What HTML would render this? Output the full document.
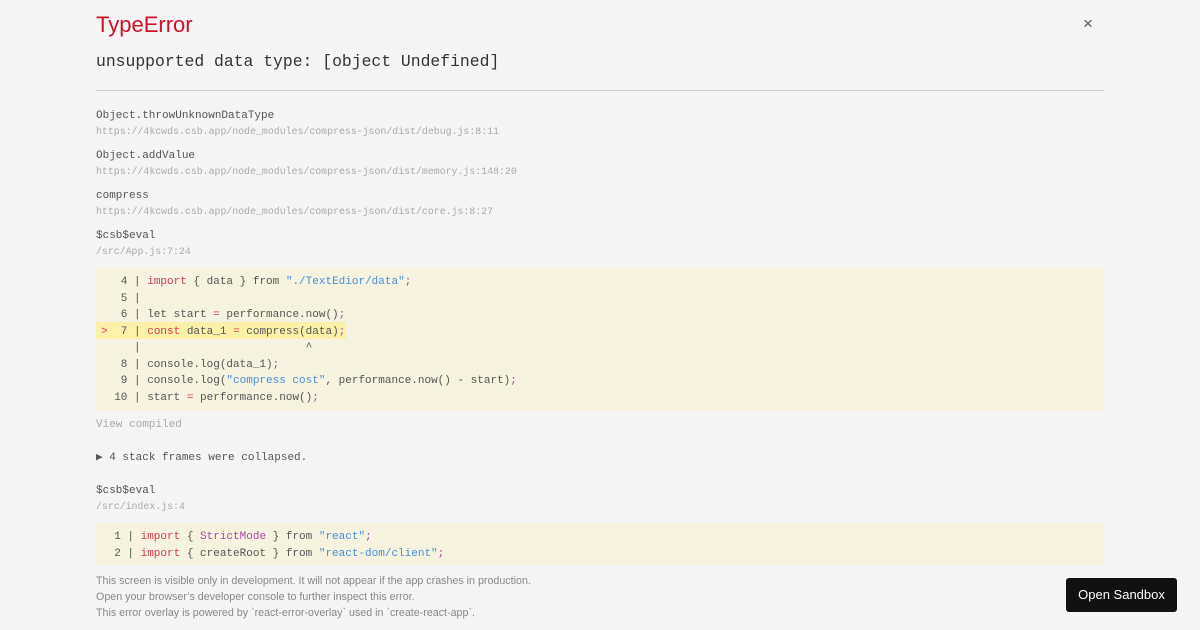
<!DOCTYPE html>
<html><head><style>
body{margin:0;width:1200px;height:630px;background:#f5f5f5;position:relative;overflow:hidden;font-family:"Liberation Mono",monospace;color:#444}
.a{position:absolute;white-space:pre;line-height:1}
.t{font-family:"Liberation Sans",sans-serif;font-size:22px;color:#ce1126;left:96px;top:14px}
.m{font-size:16.4px;color:#333;left:96px;top:54px}
.f{font-size:11px;color:#555;left:96px}
.u{font-size:9.9px;color:#aaa;left:96px}
.box{position:absolute;left:96px;width:1008px;background:#f6f3e0}
.c{font-size:11px;color:#555;left:101px}
.k{color:#d3394f}.s{color:#4a8fd6}.p{color:#a34aa8}
.ft{font-family:"Liberation Sans",sans-serif;font-size:10.7px;color:#888;left:96px}
</style></head><body>
<div class="a t">TypeError</div>
<div class="a" style="left:1083px;top:15px;font-family:'Liberation Sans',sans-serif;font-size:17px;color:#555">×</div>
<div class="a m">unsupported data type: [object Undefined]</div>
<div style="position:absolute;left:96px;top:90px;width:1008px;height:1px;background:#ccc"></div>
<div class="a f" style="top:111px">Object.throwUnknownDataType</div>
<div class="a u" style="top:127px">https://4kcwds.csb.app/node_modules/compress-json/dist/debug.js:8:11</div>
<div class="a f" style="top:151px">Object.addValue</div>
<div class="a u" style="top:167px">https://4kcwds.csb.app/node_modules/compress-json/dist/memory.js:148:20</div>
<div class="a f" style="top:191px">compress</div>
<div class="a u" style="top:207px">https://4kcwds.csb.app/node_modules/compress-json/dist/core.js:8:27</div>
<div class="a f" style="top:231px">$csb$eval</div>
<div class="a u" style="top:247px">/src/App.js:7:24</div>
<div class="box" style="top:268px;height:143px"></div>
<div style="position:absolute;left:96px;top:322px;width:250px;height:17px;background:#fbf1a8"></div>
<div class="a c" style="top:277px">   4 | <span class="k">import</span> { data } from <span class="s">"./TextEdior/data"</span><span class="p">;</span></div>
<div class="a c" style="top:294px">   5 |</div>
<div class="a c" style="top:310px">   6 | let start <span class="k">=</span> performance.now()<span class="p">;</span></div>
<div class="a c" style="top:327px"><span class="k">&gt;</span>  7 | <span class="k">const</span> data_1 <span class="k">=</span> compress(data)<span class="p">;</span></div>
<div class="a c" style="top:343px">     |                         ^</div>
<div class="a c" style="top:360px">   8 | console.log(data_1)<span class="p">;</span></div>
<div class="a c" style="top:376px">   9 | console.log(<span class="s">"compress cost"</span>, performance.now() - start)<span class="p">;</span></div>
<div class="a c" style="top:393px">  10 | start <span class="k">=</span> performance.now()<span class="p">;</span></div>
<div class="a f" style="top:420px;color:#aaa">View compiled</div>
<div class="a f" style="top:453px">▶ 4 stack frames were collapsed.</div>
<div class="a f" style="top:486px">$csb$eval</div>
<div class="a u" style="top:502px">/src/index.js:4</div>
<div class="box" style="top:523px;height:42px"></div>
<div class="a c" style="top:532px">  1 | <span class="k">import</span> { <span class="p">StrictMode</span> } from <span class="s">"react"</span><span class="p">;</span></div>
<div class="a c" style="top:549px">  2 | <span class="k">import</span> { createRoot } from <span class="s">"react-dom/client"</span><span class="p">;</span></div>
<div class="a ft" style="top:576px">This screen is visible only in development. It will not appear if the app crashes in production.</div>
<div class="a ft" style="top:592px">Open your browser’s developer console to further inspect this error.</div>
<div class="a ft" style="top:608px">This error overlay is powered by `react-error-overlay` used in `create-react-app`.</div>
<div style="position:absolute;left:1066px;top:578px;width:111px;height:34px;background:#111;border-radius:3px;color:#fff;font-family:'Liberation Sans',sans-serif;font-size:13px;line-height:34px;text-align:center">Open Sandbox</div>
</body></html>
